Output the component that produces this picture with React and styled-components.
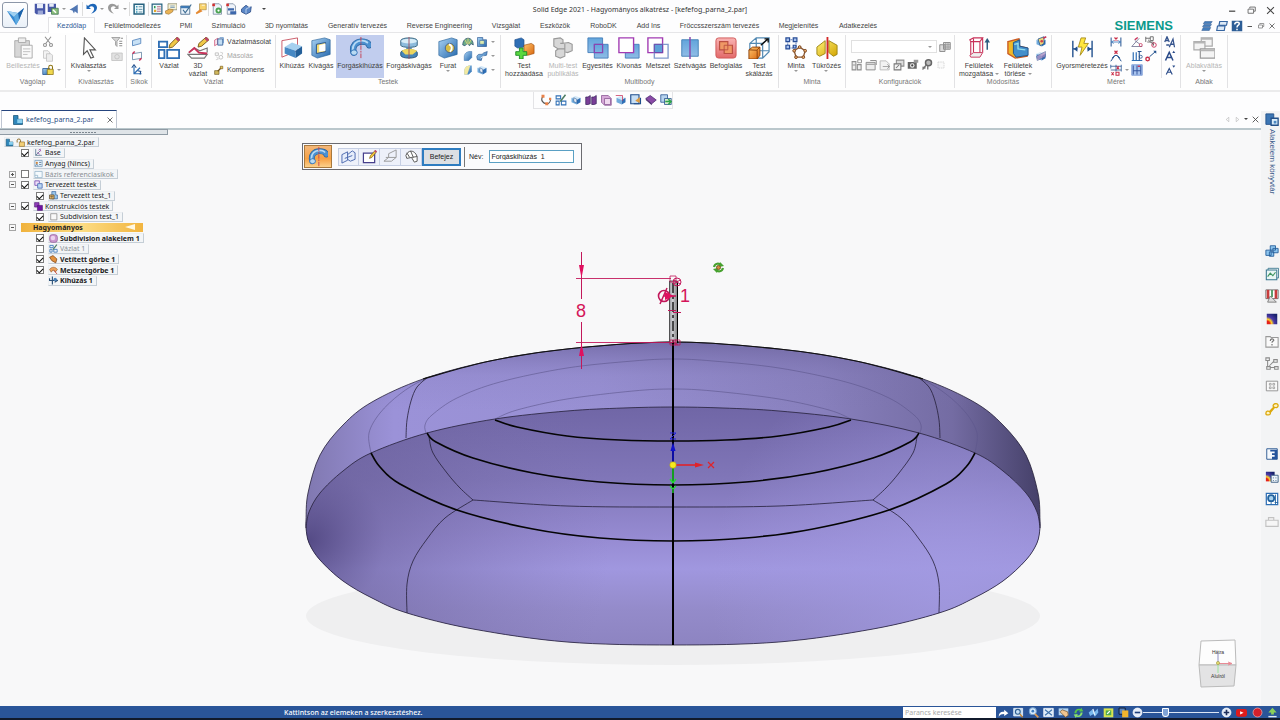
import React from "react";
import styled, { createGlobalStyle } from "styled-components";

const GlobalStyle = createGlobalStyle`
  * {
    box-sizing: border-box;
  }

  html, body, #root {
    height: 100%;
    margin: 0;
  }

  body {
    overflow: hidden;
    background: #fdfdfe;
    color: #444;
    font-family: "Liberation Sans", Arial, sans-serif;
    font-size: 7px;
    line-height: 8px;
  }

  button, input, select {
    font: inherit;
    color: inherit;
    margin: 0;
    padding: 0;
    border: 0;
    background: none;
  }
`;

/* ---------- icons ---------- */

const BLUE = "#2f6fb5";
const NAVY = "#1f4e8c";
const RED = "#c8325a";
const GREY = "#8f8f8f";
const PALE = "#bdbdbd";

const Gradients = () => (
  <defs>
    <linearGradient id="gBlue" x1="0" y1="0" x2="1" y2="1">
      <stop offset="0" stopColor="#a9d2f3" />
      <stop offset="1" stopColor="#2468ad" />
    </linearGradient>
    <linearGradient id="gSky" x1="0" y1="0" x2="0" y2="1">
      <stop offset="0" stopColor="#62a5dc" />
      <stop offset="1" stopColor="#8fbce6" />
    </linearGradient>
    <linearGradient id="gYellow" x1="0" y1="0" x2="1" y2="1">
      <stop offset="0" stopColor="#fff27a" />
      <stop offset="1" stopColor="#d3a400" />
    </linearGradient>
    <linearGradient id="gOrange" x1="0" y1="0" x2="1" y2="1">
      <stop offset="0" stopColor="#ffc46b" />
      <stop offset="1" stopColor="#d9660d" />
    </linearGradient>
    <linearGradient id="gRed" x1="0" y1="0" x2="0" y2="1">
      <stop offset="0" stopColor="#f9b3b3" />
      <stop offset="1" stopColor="#e26a6a" />
    </linearGradient>
    <radialGradient id="gHeat" cx="0" cy="1" r="1.200">
      <stop offset="0" stopColor="#e3201b" />
      <stop offset="0.25" stopColor="#e3201b" />
      <stop offset="0.4" stopColor="#ffd42a" />
      <stop offset="0.6" stopColor="#4c3aa8" />
      <stop offset="1" stopColor="#17226b" />
    </radialGradient>
  </defs>
);

const pencil = (
  <>
    <path d="M8 10 9 7 14 1.500 15.500 3 10.500 9Z" fill="#f3c73c" stroke="#7a5c12" strokeWidth=".7" />
    <path d="M13 2.500 14.300 1 16 2.500 14.800 4Z" fill="#c1446c" />
  </>
);

const box = (
  <>
    <path d="M2 5 7 2.500 14 5 9 8Z" fill="#d3e8f8" />
    <path d="M2 5v6l7 3V8Z" fill="#71abdc" />
    <path d="M9 8v6l5-3V5Z" fill={BLUE} />
  </>
);

// Small glyphs are drawn on a 16 grid, large ones on a 24 grid.
const small = {
  save: <><path d="M1 1h14v14H3L1 13Z" fill="#4757a8" /><path d="M4 1h8v6H4Z" fill="#e7ecf8" /><path d="M5 10h7v5H5Z" fill="#9aa6d6" /></>,
  saveAs: <><path d="M1 1h11v11H1Z" fill="#4757a8" /><path d="M3 1h6v4H3Z" fill="#e7ecf8" /><path d="M6 7h9v8H6Z" fill="#8abf7b" stroke="#3d6f54" /><path d="m8 9 4 4" stroke="#fff" strokeWidth="2" /></>,
  back: <path d="M13 2v12L9 11l-1 3-2-4-4-1 5-3Z" fill="#5076b3" />,
  undo: <path d="M2 2v6h6L5.500 5.700C9 3 13 5 12 9c-.4 2-2 3.500-4 5 5-1 8-4 8-8 0-5-7-7-12-2Z" fill="#1d66b8" />,
  redo: <path d="M14 2v6H8l2.500-2.300C7 3 3 5 4 9c.4 2 2 3.500 4 5-5-1-8-4-8-8 0-5 7-7 12-2Z" fill="#9a9a9a" />,
  form: <><path d="M1.500 1.500h13v13h-13Z" fill="#eef8fb" stroke="#26617f" strokeWidth="2" /><path d="M4 4h2v2H4zM4 7.500h2v2H4zM4 11h2v2H4z" fill="#3b98b9" /><path d="M7.500 5h5M7.500 8.500h5M7.500 12h5" stroke="#3c7490" /></>,
  formColor: <><path d="M1.500 1.500h13v13h-13Z" fill="#eef8fb" stroke="#26617f" strokeWidth="1.600" /><path d="M4 4h2v3H4z" fill="#2e9d52" /><path d="M4 9h3v3H4z" fill="#e4a72a" /><path d="M8 5h5M8 8h5M8 11h5" stroke="#b33a56" /></>,
  cardHand: <><path d="M4 1h12v8H4Z" fill="#f6f2d8" stroke="#8a8565" /><path d="M7 4h6M7 6h6" stroke="#688db0" /><path d="m0 11 6-3 5 1-1 3-5 3-4-1Z" fill="#e9b355" stroke="#8f682a" strokeWidth=".7" /></>,
  check: <><path d="M1 4h12v11H1Z" fill="#eaf2fa" stroke="#34597f" /><path d="M1 4h12v3H1Z" fill="#3f79b4" /><path d="m4 9 3 4 8-11" fill="none" stroke="#3e6d93" strokeWidth="1.600" /></>,
  brush: <><path d="M6 1h9v8H6Z" fill="#f8d36c" stroke="#94712a" strokeWidth=".7" /><path d="M9 3h4" stroke="#fff" /><path d="m7 8 3 3-8 4-1-2Z" fill="#e58a32" /></>,
  gearRed: <><path d="M3 1h8l3 3v11H3Z" fill="#eef3fa" stroke="#526a85" strokeWidth=".8" /><path d="m2 1 3 3m0-3L2 4" stroke="#d32f2f" strokeWidth="1.800" /><circle cx="10" cy="10" r="4" fill="#4ba352" /><circle cx="10" cy="10" r="1.500" fill="#fff" /></>,
  gearBlue: <><path d="M3 1h8l3 3v11H3Z" fill="#eef3fa" stroke="#526a85" strokeWidth=".8" /><path d="m2 1 3 3m0-3L2 4" stroke="#d32f2f" strokeWidth="1.800" /><path d="M4 7h8v3H4zM7 11h8v4H7z" fill="#3c67ac" /></>,
  ship: <><path d="M2 8 8 3l4 3 3-1-1 7-6 3-6-3Z" fill="#5a86c6" stroke="#2a4a83" /><path d="m8 8 6-3M8 8v6" stroke="#d3e3f5" /></>,
  cut: <><path d="m4 1 7 9M12 1 5 10" stroke={GREY} strokeWidth="1.400" /><circle cx="4" cy="12" r="2" fill="none" stroke={GREY} strokeWidth="1.400" /><circle cx="12" cy="12" r="2" fill="none" stroke={GREY} strokeWidth="1.400" /></>,
  copy: <><path d="M2 1h6l2 2v8H2Z" fill="#f3f3f3" stroke={PALE} /><path d="M6 5h6l2 2v8H6Z" fill="#ededed" stroke={PALE} /></>,
  lockTool: <><path d="M1 6h9v8H1Z" fill="url(#gBlue)" stroke={NAVY} /><path d="M7 7h8v7H7Z" fill="#f0d84e" stroke="#8c7312" /><path d="M9 7V4c0-3 5-3 5 0v3" fill="none" stroke="#8c7312" strokeWidth="1.400" /></>,
  filter: <><path d="M1 2h11L8 7v7l-2-2V7Z" fill="#d5d5d5" stroke={GREY} /><path d="M13 3h3M11 7h4M11 10h4M11 13h4" stroke={GREY} strokeWidth="1.400" /></>,
  camera: <><path d="M1 4h14v10H1Z" fill="#e2e2e2" stroke={PALE} /><circle cx="8" cy="9" r="3" fill="none" stroke={PALE} /></>,
  plane: <path d="M2 6 13 3v7L2 13Z" fill="#c8e1f5" stroke="#5c8abf" strokeWidth="1.200" />,
  planeRed: <><path d="M2 5 14 3v8L2 13Z" fill="none" stroke="#597b9c" /><path d="m2 5 3-3M14 11l-3 3" stroke={RED} strokeWidth="2" /></>,
  axes: <><path d="M4 3v10h10M4 13 12 5" fill="none" stroke={BLUE} strokeWidth="1.600" /><path d="m1 5 3-4 3 4M9 9l4 1-1 4" fill="none" stroke={NAVY} strokeWidth="1.400" /></>,
  sketchCopy: <><path d="M1 5 6 2v9l-5 3Z" fill="#f5e5ee" stroke={RED} /><path d="M6 3h8v10H6Z" fill="#c4def3" stroke={NAVY} strokeWidth="1.200" /><path d="M9 1h6v9" fill="none" stroke={BLUE} /></>,
  sketchMove: <><path d="M2 3h5v4H2z" fill="none" stroke={PALE} strokeWidth="1.400" /><circle cx="11" cy="10" r="3" fill="none" stroke={PALE} strokeWidth="1.400" /><path d="m4 9 3 4-4 1M10 2l4 1-1 3" fill="none" stroke={PALE} /></>,
  component: <><path d="M1 9h7v6H1Z" fill="#d0b85d" stroke="#685521" /><path d="m6 10 6-6" stroke="#735618" strokeWidth="2" /><path d="M10 2h4v4h-4Z" fill="#e8c85a" stroke="#735618" /></>,
  dome: <><path d="M1 12c0-12 14-12 14 0l-3-2-2 3-3-3-3 3Z" fill="#6bab86" stroke="#2d5272" /><path d="M8 3v8M4 5l3 6M12 5l-3 6" stroke="#f0db78" /></>,
  thin: <><path d="M2 2h7v3h5v9H2Z" fill="url(#gBlue)" stroke={NAVY} strokeWidth=".8" /><path d="M5 6h6v5H5Z" fill="#dcebb0" stroke={NAVY} strokeWidth=".6" /></>,
  round: <path d="M3 14V9c0-4 3-7 8-7h2v8l-4 4Z" fill="url(#gBlue)" stroke="#336da8" strokeWidth=".7" />,
  roundY: <><path d="M3 14V9c0-4 3-7 8-7h2v8l-4 4Z" fill="url(#gBlue)" /><path d="M3 14V9c0-4 3-7 8-7L7 14Z" fill="#f2e9a0" /></>,
  sweep: <><path d="M1 9c2-6 6-1 9-5l5-2-1 5c-4 1-5 0-6 3l-1 4-5-1Z" fill="url(#gBlue)" stroke={NAVY} strokeWidth=".8" /><path d="m6 11 4-3" stroke="#fff" /></>,
  boxCut: <>{box}<path d="m5 5 4 2v5l-4-2Z" fill="#e5edf7" stroke={NAVY} strokeWidth=".7" /></>,
  cfgA: <><path d="M1.500 3.500h5v11h-5zM8.500 7.500h5v7h-5z" fill="#eee" stroke={GREY} strokeWidth="1.400" /><path d="M9 1h5v4H9zM2 8h4" fill="none" stroke={GREY} strokeWidth="1.200" /></>,
  cfgB: <><path d="M1.500 4.500h12v10h-12z" fill="#eee" stroke={GREY} strokeWidth="1.300" /><path d="M2 7h11M7 2h8v6" fill="none" stroke={GREY} strokeWidth="1.300" /></>,
  cfgC: <><path d="M1.500 2.500h8l4 4v8h-12z" fill="#f2f2f2" stroke={PALE} strokeWidth="1.300" /><path d="M5 10h9m-3-3 3 3-3 3" fill="none" stroke={GREY} /></>,
  cfgD: <><path d="M4.500 1.500h10v8h-10z" fill="#ddd" stroke={GREY} strokeWidth="1.400" /><path d="M1.500 6.500h9v8h-9z" fill="#f4f4f4" stroke="#777" strokeWidth="1.400" /><path d="m4 12 4-4" stroke="#777" strokeWidth="1.400" /></>,
  cfgCam: <><path d="M1 4h12v9H1Z" fill="#666" /><circle cx="7" cy="8.500" r="3" fill="#eee" /><circle cx="7" cy="8.500" r="1.500" fill="#444" /><path d="M9 1h6v4H9z" fill="#999" /></>,
  cfgKey: <><circle cx="10" cy="5" r="4" fill="#bbb" stroke="#666" strokeWidth="2" /><path d="m7 8-5 6M9 9v5M2 11l4 1" stroke="#777" strokeWidth="1.800" /></>,
  cfgEmpty: <path d="M4 4h8v8H4Z" fill="#fafafa" stroke="#ccc" strokeDasharray="2 1" />,
  cfgStack: <><path d="M1 5h7v9H1zM6 2h9v9H6z" fill="#dcdcdc" stroke={GREY} strokeWidth="1.300" /><path d="M6 5h9M6 8h9M9 2v9M12 2v9" stroke={GREY} /></>,
  faceRed: <>{box}<path d="m4 4 8-3v9l-5 3Z" fill="#edd679" stroke={NAVY} /><circle cx="9" cy="7" r="1.800" fill="#d2404a" /><path d="m11 3 4-2" stroke={RED} strokeWidth="2" /></>,
  facePurple: <>{box}<path d="M2 8 14 2v7L3 14Z" fill="#ab86bb" opacity=".7" stroke="#405b98" /></>,
  dimH: <><path d="M1.500 2v12M14.500 2v12" stroke={NAVY} strokeWidth="1.300" /><path d="M2 8h12M5 6 2 8l3 2M11 6l3 2-3 2" fill="none" stroke={BLUE} /><path d="m6 2 4 4m0-4L6 6" stroke="#c92d47" strokeWidth="1.600" /></>,
  dimAngle: <><path d="m6 1 4 4m0-4L6 5" stroke="#c92d47" strokeWidth="1.600" /><path d="M1 15 6 8M15 15l-5-7M3 11c2-5 8-5 10 0" fill="none" stroke={NAVY} strokeWidth="1.300" /></>,
  dimChain: <><path d="M1 3h14M1 1v5M8 1v9M15 1v9M1 8h14" stroke={NAVY} /><path d="m9 3 3 4m0-4L9 7M2 11l3 4m0-4-3 4M8 11h4v4H8z" fill="none" stroke="#c92d47" strokeWidth="1.400" /></>,
  dimSlope: <><path d="M1 14 11 3M1 14h14M5 6l7 5" stroke="#668" /><path d="m5 5 4-3" stroke={RED} strokeWidth="2" /><circle cx="13" cy="12" r="2" fill="none" stroke={RED} /></>,
  dimBars: <><path d="M3 3v11M7 3v11M1 14h14" stroke={BLUE} strokeWidth="1.600" /><path d="M11 2v12M9 2h5" stroke={NAVY} strokeWidth="1.400" /><circle cx="13" cy="9" r="2" fill="none" stroke={NAVY} /></>,
  dimGrid: <><path d="M1 1h14v14H1Z" fill="#a9c4ee" stroke="#6b8fd0" /><path d="M3 2v12M8 2v12M13 2v12M3 9h10" stroke="#33549d" strokeWidth="1.300" /><path d="M9 3h3" stroke="#c13a5c" strokeWidth="2" /></>,
  dimTag: <><path d="M1 1v7M1 3h6M7 1h4v5H7zM3 8h8v5" fill="none" stroke="#666" strokeWidth="1.200" /><circle cx="12" cy="12" r="3" fill="none" stroke={RED} strokeWidth="1.200" /><path d="m4 5 8 7" stroke="#555" /></>,
  dimArrow: <><circle cx="3.500" cy="12" r="2.400" fill="none" stroke="#c92d47" strokeWidth="1.800" /><path d="m6 9 8-7" stroke={NAVY} strokeWidth="1.300" /><path d="M11 1h4v4Z" fill={NAVY} /></>,
  textStyle: <path d="m1 8 3-7 3 7M2 6h4M7 15l5-11 2 11M9 11h5M3 12h4" fill="none" stroke="#36548d" strokeWidth="1.700" />,
  textUp: <><path d="M2 14 7 3l5 11M4 10h6" fill="none" stroke="#294a88" strokeWidth="2" /><path d="m11 4 2-3 2 3Z" fill="#294a88" /></>,
  textDown: <><path d="m3 14 4-8 4 8M4 11h6" fill="none" stroke="#294a88" strokeWidth="1.500" /><path d="m11 2 2 3 2-3Z" fill="#294a88" /></>,
  arc: <><path d="M4 3c-4 5 0 10 5 10 3 0 5-3 5-6" fill="none" stroke="#555" strokeWidth="1.500" /><path d="M2 1h4v4H2zM7 11h4v4H7zM12 5h3v3h-3z" fill="#e9824a" /></>,
  sketch: <><path d="M1.500 2.500h6v4h-6zM1.500 9.500h4v5h-4zM8.500 9.500h6v5h-6z" fill="none" stroke={BLUE} strokeWidth="1.400" /><path d="m7 10 7-9" stroke="#4c7b61" strokeWidth="2" /></>,
  mirror: <path d="M1 4h3l3-2v11l-3 1H1zM9 4h3l3-2v11l-3 1H9z" fill="#7a3e98" stroke="#3c255f" />,
  purpleBox: <><path d="M2 2h9l4 4v9H6l-4-4Z" fill="#d6a8d8" stroke="#875492" /><path d="M6 6h8v8H6Z" fill="#f0d9ef" stroke="#875492" /></>,
  boxRed: <>{box}<path d="M1 2h9v7" fill="none" stroke={RED} /></>,
  screen: <><path d="M1 1h11v12H1Z" fill="#c6def5" stroke={NAVY} strokeWidth="1.500" /><path d="M5 13h9V5" fill="none" stroke={NAVY} strokeWidth="1.500" /><path d="m7 9 6-5v8Z" fill="#e09a3e" /></>,
  diamond: <><path d="m1 6 6-4 8 6-6 5Z" fill="#8a4aa7" stroke="#4b2a6e" /><path d="m1 6 8 7v2L1 8Z" fill="#4b2a6e" /></>,
  export: <><path d="M1 1h9v10H1Z" fill="#b7d3ee" stroke={NAVY} /><path d="M6 6h9v8H6Z" fill="#d9e9d1" stroke={NAVY} /><path d="M7 10h7m-3-3 4 3-4 4" fill="none" stroke="#2ea34b" strokeWidth="2" /></>,
  winStack: <path d="M5 2h10l-2 3H3zM4 6h10l-2 3H2zM3 10h10l-2 4H1z" fill="#437dbc" stroke="#234f86" strokeWidth=".6" />,
  winStack2: <path d="M5 2h10l-1 5H4zM2 8h10l-1 6H1z" fill="#dce9f6" stroke="#3665a1" strokeWidth="1.600" />,
  help: <><path d="M1 1h14v14H1Z" fill="#2c5d96" /><path d="M5 6c0-4 6-4 6-1 0 2-3 2-3 5" fill="none" stroke="#fff" strokeWidth="2" /><path d="M7 11.500h2v2H7z" fill="#fff" /></>,
  min: <path d="M3 9h9" stroke="#444" strokeWidth="1.800" />,
  restore: <path d="M5.500 5V3h8v6h-2M3 6h8v6H3Z" fill="none" stroke="#666" strokeWidth="1.300" />,
  close: <path d="m3 3 10 10M13 3 3 13" stroke="#444" strokeWidth="1.500" />,
  part: <><path d="M2 2h6v5h6v7H2Z" fill="#2f86ba" stroke="#1c5577" /><path d="M7 7h7v5H7z" fill="#8bd0ef" /></>,
  openLock: <><path d="M6 7h9v8H6Z" fill="#f2cf78" stroke="#87621a" /><path d="M8 7V4c0-3-6-3-6 0v4" fill="none" stroke="#87621a" strokeWidth="1.600" /></>,
  base: <><path d="M3 2v11h11M3 13 11 5" fill="none" stroke="#54718e" strokeWidth="1.400" /><path d="m8 4 3-2 1 4M6 8l4 3" fill="none" stroke="#a44fae" strokeWidth="1.500" /></>,
  material: <><path d="M1.500 2.500h13v11h-13z" fill="#eaf4fb" stroke="#4d7ca5" /><circle cx="5" cy="7" r="2" fill="#d08843" /><path d="M3 12c0-3 4-3 4 0M9 6h4M9 10h4" fill="none" stroke="#34597f" strokeWidth="1.300" /></>,
  refPlane: <path d="M1.500 2.500h13v11h-13zM1.500 9.500h5v4" fill="#f5fafd" stroke="#8fafc8" strokeWidth="1.300" />,
  bodies: <><path d="M1.500 1.500h8v8h-8z" fill="#efe0f8" stroke="#7c4fb5" strokeWidth="1.500" /><path d="M6.500 6.500h8v8h-8z" fill="#bcd8f2" stroke="#4c71b8" strokeWidth="1.500" /></>,
  body: <><path d="M5 1h7v6h3v7H5Z" fill="#99c6ea" stroke={NAVY} /><path d="M1 7h8v7H1Z" fill="#f4c471" stroke="#5a4b31" strokeWidth="1.400" /><path d="M5 8v5M2 10h6" stroke="#5a4b31" /></>,
  construct: <><path d="M1 1h8v8H1z" fill="#8f3fb8" stroke="#4a126b" /><path d="M6 6h9v9H6z" fill="#7112a4" stroke="#4a126b" /></>,
  blank: <path d="M3 3h11v11H3Z" fill="#f8f8f8" stroke="#888" strokeWidth="1.300" />,
  sphere: <><rect x="1" y="1" width="14" height="14" rx="5" fill="#c996cc" stroke="#8a5490" /><circle cx="7" cy="7" r="4" fill="#ecd3ee" /></>,
  curveA: <path d="m1 4 6-3 7 6-2 7-7-4Z" fill="#e2903c" stroke="#7b4518" strokeWidth="1.300" />,
  curveB: <><path d="M1 6c4-5 10-5 14 0l-3 4-5-3-3 4Z" fill="#eda25a" stroke="#8a4c1b" /><path d="m9 8 5 6" stroke="#c0392b" strokeWidth="1.600" /></>,
  extrude: <><path d="M1 4v4h9V4M6 1v14M10 6l5 2-5 3" fill="none" stroke="#2a5078" strokeWidth="2" /><circle cx="11" cy="6" r="3" fill="#4e86bf" /></>,
  library: <><path d="M1 1h9v12H1Z" fill="#3d76b4" stroke="#23518a" /><path d="M7 6h8v8H7Z" fill="#d9ecfa" stroke="#23518a" strokeWidth="1.500" /><path d="M10 9h3v3h-3z" fill="#4b88c2" /></>,
  cubes: <path d="M6 2h6v5H6zM9 5h6v5H9zM1 7h6v6H1zM5 9h5v5H5z" fill="#8cc4ee" stroke="#245d99" />,
  picture: <><path d="M3.500 1.500h12v11h-12z" fill="#fff" stroke="#37768e" /><path d="M1.500 3.500h12v11h-12z" fill="#e9f5f5" stroke="#37768e" strokeWidth="1.200" /><path d="m3 11 3-4 3 3 3-4" fill="none" stroke="#3f9460" strokeWidth="1.300" /></>,
  stripes: <><path d="M1 1h14v10H1Z" fill="#fff" stroke="#666" /><path d="M2 1h3v10H2z" fill="#c73c3c" /><path d="M7 1h2v8H7z" fill="#45945b" /><path d="M11 1h3v10h-3z" fill="#c73c3c" /><path d="M3 15 6 8l7 7Z" fill="#ddd" stroke="#777" /></>,
  heat: <path d="M2 2h12v12H2Z" fill="url(#gHeat)" />,
  folderHelp: <><path d="M1 3h5l1 1h8v11H1Z" fill="#fafafa" stroke="#999" strokeWidth="1.200" /><path d="M6 8c0-3 4-3 4-1 0 1-2 1-2 3M8 11.500V13" fill="none" stroke="#777" strokeWidth="1.400" /></>,
  tree: <path d="M1 1h4v3H1zM10 3h4v3h-4zM2 11h4v3H2zM11 11h4v3h-4zM3 4v7M6 12h5M5 10l5-5" fill="none" stroke="#8a8a8a" strokeWidth="1.200" />,
  keypad: <><path d="M1.500 2.500h13v11h-13z" fill="#fafafa" stroke="#8a8a8a" /><path d="M5 5h2v2H5zM9 5h2v2H9zM5 9h2v2H5zM9 9h2v2H9z" fill="none" stroke="#8a8a8a" strokeWidth=".8" /></>,
  link: <path d="M10 6c-3-4 5-6 5-2 0 2-2 3-4 2l-5 6c1 4-5 3-5 1 0-3 3-3 4-2Z" fill="#fff3c2" stroke="#dca90d" strokeWidth="1.500" />,
  bookF: <><path d="M2 2h12v12H2Z" fill="#f5f9fd" stroke={NAVY} /><path d="M6 3h8v11H8v-3h3V9H8V7h3V5H6Z" fill="#24549c" /></>,
  heatForm: <><path d="M1 2h10v11H1Z" fill="url(#gHeat)" /><path d="M7 6h8v8H7Z" fill="#eef4fa" stroke="#34597f" /><path d="M9 9h1m2 0h1M9 12h1m2 0h1" stroke="#34597f" /></>,
  gearBox: <><path d="M1.500 1.500h13v13h-13z" fill="#fff" stroke={BLUE} strokeWidth="1.400" /><circle cx="7" cy="7" r="3.500" fill="#a8d2ee" stroke="#22639f" strokeWidth="2" /><path d="M7 11v3M11 12h4M12 3v11" stroke="#22639f" /></>,
  folder: <path d="M1 6h3V3h6v3h5v7H1ZM4 6h6" fill="#f6f6f6" stroke="#c2c2c2" strokeWidth="1.300" />,
  redoWhite: <path d="M1 14c0-6 4-8 8-7V4l6 5-6 4v-3c-4 0-6 1-8 4Z" fill="#fff" />,
  zoomArea: <><path d="M1 2h13v11H1Z" fill="#c5dff5" stroke="#fff" /><circle cx="7" cy="7" r="3.500" fill="none" stroke="#2d5d8f" strokeWidth="1.600" /><path d="m10 10 4 5" stroke="#c4822a" strokeWidth="2" /></>,
  zoom: <><circle cx="7" cy="6" r="5" fill="#d7ebfb" stroke="#7aa5d1" strokeWidth="1.500" /><circle cx="7" cy="6" r="2" fill="#3d7cc0" /><path d="m10 10 5 5" stroke="#e39d51" strokeWidth="2.400" /></>,
  fit: <><path d="M1 2h14v12H1Z" fill="#dcebf8" stroke="#fff" /><path d="m3 4 10 8M13 4 3 12" stroke="#3e70a9" strokeWidth="1.600" /></>,
  hand: <><path d="M1 2h14v10H1Z" fill="#b2d3ef" /><path d="m3 7 3-3 8 3 1 5-4 3Z" fill="#f0c48f" stroke="#6d4c28" /></>,
  rotate: <><path d="M2 9c0-5 5-8 9-6l1-2 3 5-6 1 1-2c-3-1-5 1-5 4Z" fill="#58c548" /><path d="M14 8c0 5-5 8-9 6l-1 2-3-5 6-1-1 2c3 1 5-1 5-4Z" fill="#8ce06a" /></>,
  spin: <><path d="m1 8 5-4 3 4 5-6 1 6-5 6-2-4-5 3Z" fill="#79b9ed" /><path d="m7 3 3 9" stroke="#dceffd" strokeWidth="2" /></>,
  style: <><path d="M1 2h14v13H1Z" fill="#d8e552" /><path d="M4 5h8v7H4Z" fill="#4da94e" /><path d="m6 10 4-4" stroke="#fff" strokeWidth="2" /></>,
  colors: <><path d="M1.500 1.500h9v9h-9z" fill="#5c86bd" stroke="#111c33" strokeWidth="1.400" /><path d="M6 5h9v10H6Z" fill="#f1b52d" /></>,
  video: <><rect y="3" width="16" height="11" rx="3" fill="#e01b1b" /><path d="m6 6 5 2.500L6 11Z" fill="#fff" /></>,
  record: <circle cx="8" cy="8" r="6.500" fill="#d3202c" stroke="#f3b2b2" />,
  upload: <><path d="m8 1 6 7h-4v3H6V8H2Z" fill="#8bd05b" /><path d="M2 13h12v2H2Z" fill="#dfe9f4" /></>,
  minus: <><circle cx="8" cy="8" r="6.500" fill="#e6eefa" stroke="#fff" /><path d="M4 8h8" stroke="#1d3f7c" strokeWidth="2.400" /></>,
  plus: <><circle cx="8" cy="8" r="6.500" fill="#e6eefa" stroke="#fff" /><path d="M4 8h8M8 4v8" stroke="#1d2f5c" strokeWidth="2.400" /></>,
  cmdPlane: <path d="M1 6 7 3v9l-6 3ZM7 6l5-4 3 2v7l-5 2-3-2M4 10l8-3" fill="#e6edfb" stroke="#4a68ae" />,
  cmdSketch: <><path d="M1.500 4.500h12v10h-12z" fill="#fff" stroke="#463f8c" strokeWidth="1.300" />{pencil}</>,
  cmdAxis: <path d="M1 13h8l5-4H6ZM6 9V5l8-4v8M3 9h3" fill="none" stroke="#999" />,
  cmdArc: <path d="M2 7c2-6 9-7 12 1v5l-3 1-3-5-5 1ZM8 9l6-1M3 4l3 5M7 2l3 7" fill="#fff" stroke="#555" />,
};

const revolve = (
  <>
    <path d="M5 17C3 9 8 5 14 5c4 0 7 1 8 4" fill="none" stroke="#265f9c" strokeWidth="7" strokeLinecap="round" />
    <path d="M5 17C3 9 8 5 14 5c4 0 7 1 8 4" fill="none" stroke="#4c90cf" strokeWidth="5.500" strokeLinecap="round" />
    <path d="M4 14c0-6 4-10 10-10 3 0 5 1 6 2" fill="none" stroke="#b7daf5" strokeWidth="2" strokeLinecap="round" />
    <ellipse cx="5.500" cy="17" rx="3.500" ry="3" fill="#b9daf2" stroke={BLUE} />
    <path d="M13 0v24" stroke="#c43b4e" strokeDasharray="5 1 2 1" />
  </>
);

const large = {
  paste: <><path d="M3 4h16v18H3Z" fill="#d7d7d7" stroke="#aaa" /><path d="M7 1h8v5H7Z" fill="#eee" stroke="#aaa" /><path d="M10 9h12v14H10Z" fill="#fafafa" stroke="#aaa" /><path d="M12 13h8M12 16h8M12 19h5" stroke="#bbb" /></>,
  cursor: <path d="m7 1 12 13h-6l4 8-3 1-4-8-4 4Z" fill="#fff" stroke="#555" strokeWidth="1.200" />,
  sketch: <><path d="M1 5h9v6H1zM1 14h6v9H1zM10 14h13v9H10z" fill="#fff" stroke={BLUE} strokeWidth="2" /><path d="m12 12 1-4 8-8 3 3-8 8Z" fill="#efc848" stroke="#77591a" /><path d="m19 2 2-2 3 3-2 2Z" fill="#bb426b" /></>,
  sketch3d: <><path d="m2 17 6-5 6 3 8-3v5M1 19h21l-3 4H5Z" fill="none" stroke="#777" strokeWidth="1.300" /><path d="m2 17 6-5 5 5 9 1" fill="none" stroke={RED} strokeWidth="2" /><path d="m12 11 1-4 8-7 3 3-8 7Z" fill="#efc848" stroke="#77591a" /><path d="m19 2 2-2 3 3-2 2Z" fill="#bb426b" /></>,
  extrude: <><path d="M1 4 18 1v14L1 22Z" fill="#fff" stroke="#c75463" /><path d="m4 11 8-5 11 4-7 5Z" fill="#a6d0ef" /><path d="m4 11 12 4v8L4 18Z" fill="#4789c4" /><path d="m16 15 7-5v8l-7 5Z" fill="#246099" /></>,
  cutout: <><path d="m2 4 14-3 6 2v16L8 23l-6-3Z" fill="url(#gBlue)" stroke="#286399" strokeWidth=".7" /><path d="m7 8 10-2v10L7 18Z" fill="#f4dc74" stroke={NAVY} /><path d="m10 9 7-2v8l-7 1Z" fill="#fff" /></>,
  revolve,
  revolveCut: <><path d="M3 4c0-4 18-4 18 0v5c0 3-18 3-18 0Z" fill="#8dbbdc" stroke="#33617c" /><ellipse cx="12" cy="4.500" rx="8.500" ry="2.500" fill="#d8edf7" /><path d="M9 11h6v5H9Z" fill="#5a89ad" /><path d="M3 17c0-4 18-4 18 0v3c0 4-18 4-18 0Z" fill="#4686ba" stroke="#254f73" /><path d="M4 15c4-3 12-3 17 0l-5 4H8Z" fill="#edd65d" /><path d="M12 0v24" stroke="#9b5060" /></>,
  hole: <><path d="m2 5 14-4 6 2v16L8 23l-6-3Z" fill="url(#gBlue)" stroke="#286399" strokeWidth=".7" /><circle cx="14" cy="12" r="5" fill="#d7bd45" stroke="#46618b" /><path d="M13 8c4 1 4 6 1 8" fill="none" stroke="#fff" strokeWidth="2" /></>,
  addBody: <><path d="M2 3 9 1l3 2v8l-7 1-3-2Z" fill={BLUE} stroke={NAVY} strokeWidth=".7" /><path d="m12 9 8-2 3 2v9l-7 2-4-2Z" fill="url(#gOrange)" stroke="#9c4b0b" strokeWidth=".7" /><path d="M7 12h4v4h4v4h-4v4H7v-4H3v-4h4Z" fill="#5bd93f" stroke="#1f8a28" /></>,
  multiBody: <path d="m2 2 7-1 3 2v4l6-1 4 2v7l-5 2-3-1v5l-5 2-5-2v-6l3-2-5-3ZM9 7h5v6H5M14 13v5" fill="#d7d7d7" stroke="#999" strokeWidth="1.200" />,
  union: <><path d="M1 1h16v16H1Z" fill="url(#gSky)" stroke="#447eba" /><path d="M8 8h15v15H8Z" fill="url(#gSky)" stroke="#447eba" /><path d="M8 8h9v9H8Z" fill="none" stroke="#8a45b1" strokeWidth="1.400" /></>,
  subtract: <><path d="M8 8h15v15H8Z" fill="url(#gSky)" stroke="#447eba" /><path d="M1 1h16v16H1Z" fill="#fff" stroke="#a13bb2" strokeWidth="1.500" /></>,
  intersect: <><path d="M1 1h16v16H1Z" fill="#fff" stroke="#a13bb2" strokeWidth="1.500" /><path d="M8 8h15v15H8Z" fill="none" stroke="#829bcd" strokeWidth="1.500" /><path d="M8 8h9v9H8Z" fill="#5da0d8" stroke="#6f40a5" /></>,
  split: <><path d="M3 3h18v18H3Z" fill="url(#gSky)" stroke="#4380b6" /><path d="M12 0v24" stroke="#884aad" strokeWidth="1.600" /></>,
  enclose: <><rect x="1" y="1" width="22" height="22" rx="3" fill="url(#gRed)" stroke="#cf5555" /><path d="M5 5h9v4h5v9h-9v-4H5Z" fill="#ef9865" stroke="#bc5042" strokeWidth="1.300" /><path d="M10 14V9h4M10 14h4V9" fill="none" stroke="#bc5042" /></>,
  scale: <><path d="M2 7 9 1h14v15l-7 7H2ZM2 7h14v16M16 7l7-6M9 1v14H2M9 15h14" fill="#fff" stroke="#5289b3" strokeWidth="1.300" /><path d="m1 14 4-3h8v9l-3 4H1Z" fill="url(#gOrange)" stroke="#8a3f0a" /><path d="m1 14 9 .5V24M10 14l3-3" fill="none" stroke="#8a3f0a" /><path d="m14 9 8-7m-4 0h4v4" fill="none" stroke="#111" strokeWidth="1.500" /></>,
  pattern: <><path d="M3 3h9v9H3Z" fill="none" stroke="#4b6fb3" strokeDasharray="2 1" /><path d="M1 1h4v4H1zM9 1h4v4H9zM1 9h4v4H1zM9 9h3v3H9z" fill="#a8c2ef" stroke="#274c96" strokeWidth="1.300" /><path d="m16 11 6 4-2 7h-8l-2-7Z" fill="#fff" stroke="#8a5935" strokeWidth="1.500" /><circle cx="16" cy="11" r="1.500" fill="#f0b06e" stroke="#744019" /><circle cx="22" cy="15" r="1.500" fill="#f0b06e" stroke="#744019" /><circle cx="20" cy="22" r="1.500" fill="#f0b06e" stroke="#744019" /><circle cx="12" cy="22" r="1.500" fill="#f0b06e" stroke="#744019" /><circle cx="10" cy="15" r="1.500" fill="#f0b06e" stroke="#744019" /></>,
  mirror: <><path d="m1 11 9-7v14l-6 3-3-2ZM14 4l9 5v10l-4 2-5-4Z" fill="url(#gYellow)" stroke="#9b8411" /><path d="M12.500 0v24" stroke="#d42828" strokeWidth="2" /></>,
  moveFace: <><path d="m2 3 4-2h10l-3 4H3ZM3 5v15M13 5v16M16 1v16M6 2v15" fill="none" stroke={RED} strokeWidth="1.200" /><path d="m2 20 4-3h10l-3 5H3Z" fill="#eee" stroke={RED} /><path d="M21 14V4" stroke="#2c5b7f" strokeWidth="1.600" /><path d="m18 6 3-5 3 5Z" fill="#2c5b7f" /></>,
  deleteFace: <><path d="m1 5 12-3v8l9 2v9L9 23l-8-5Z" fill="#f0b928" stroke="#cc5b23" strokeWidth="1.500" /><path d="m7 6 7-3v7l9 2v8l-13 2-3-4Z" fill="#438fcb" stroke="#1e5188" /><path d="m8 8 4-1v6l8 1" fill="none" stroke="#93dded" strokeWidth="1.500" /></>,
  quickDim: <><path d="M2 4v18M23 4v18M2 13h5M18 13h5" stroke={NAVY} strokeWidth="1.500" /><path d="m3 13 4-3v6Zm19 0-4-3v6Z" fill={NAVY} /><path d="M11 1h5l-2 6h5L10 20l2-9H8Z" fill="#ffe63f" stroke="#a78d1b" /></>,
  windows: <><path d="M9 1h12v9H9Z" fill="#f4f4f4" stroke="#aaa" strokeWidth="1.300" /><path d="M1 5h12v9H1Z" fill="#f4f4f4" stroke="#aaa" strokeWidth="1.300" /><path d="M8 13h16v10H8Z" fill="#f4f4f4" stroke="#999" strokeWidth="1.300" /><path d="M9 2h12M1 6h12M8 14.500h16" stroke="#b5b5b5" strokeWidth="2" /></>,
};

const Svg = styled.svg`
  display: block;
  flex: none;
  width: ${({ $size }) => $size}px;
  height: ${({ $size }) => $size}px;
`;

const Icon = ({ name, size = 12 }) => (
  <Svg viewBox="0 0 16 16" $size={size} aria-hidden="true">{small[name]}</Svg>
);

const BigIcon = ({ name, size = 22 }) => (
  <Svg viewBox="0 0 24 24" $size={size} aria-hidden="true">{large[name]}</Svg>
);

const Caret = styled.i`
  flex: none;
  width: 0;
  height: 0;
  border: 2px solid transparent;
  border-top-color: ${({ $dark }) => ($dark ? "#444" : "#999")};
  border-bottom: 0;
`;

/* ---------- frame ---------- */

const Page = styled.div`
  display: flex;
  flex-direction: column;
  height: 100vh;
`;

const Header = styled.header`
  position: relative;
  flex: none;
`;

const AppButton = styled.button`
  position: absolute;
  left: 2px;
  top: 2px;
  width: 26px;
  height: 26px;
  border: 1px solid #8c97a8;
  border-radius: 3px;
  background: linear-gradient(#fff, #e9f0f8);
`;

const TitleRow = styled.div`
  display: grid;
  grid-template-columns: 1fr auto 1fr;
  align-items: center;
  height: 17px;
`;

const QuickAccess = styled.div`
  display: flex;
  align-items: center;
  padding-left: 33px;
`;

const QuickButton = styled.button`
  display: flex;
  align-items: center;
  justify-content: center;
  gap: 3px;
  width: ${({ $w }) => $w || 15}px;
  height: 14px;
  border-right: ${({ $edge }) => ($edge ? "1px solid #ddd" : "0")};
`;

const Title = styled.h1`
  margin: 0;
  padding-top: 2px;
  font: 400 7px/10px "Noto Sans", sans-serif;
  color: #333;
`;

const WindowControls = styled.div`
  display: flex;
  justify-content: flex-end;
  padding: 3px 4px 0 0;
  gap: ${({ $gap }) => $gap}px;
`;

const PlainButton = styled.button`
  display: grid;
  place-items: center;
`;

const TabRow = styled.nav`
  display: flex;
  align-items: stretch;
  height: 16px;
  padding-left: 48px;
  border-bottom: 1px solid #e6e6e8;
`;

const Tab = styled.a`
  flex: none;
  width: ${({ $w }) => $w}px;
  height: 16px;
  padding-top: 4px;
  text-align: center;
  text-decoration: none;
  white-space: nowrap;
  color: ${({ $active }) => ($active ? "#2d5796" : "#444")};
  border: 1px solid ${({ $active }) => ($active ? "#e3e3e6" : "transparent")};
  border-bottom: 0;
  background: ${({ $active }) => ($active ? "#fff" : "transparent")};
`;

const Brand = styled.strong`
  margin-left: auto;
  padding: 2px 28px 0 0;
  font-size: 13px;
  line-height: 14px;
  color: #0b9a8c;
`;

/* ---------- ribbon ---------- */

const Ribbon = styled.div`
  display: flex;
  flex: none;
  height: 59px;
  padding: 2px 0;
  border-bottom: 2px solid #ebebec;
  background: #fefefe;
`;

const Group = styled.section`
  display: flex;
  flex: none;
  flex-direction: column;
  width: ${({ $w }) => $w}px;
  border-right: 1px solid #e2e2e4;
`;

const GroupBody = styled.div`
  display: flex;
  height: 43px;
  padding-left: ${({ $pad }) => $pad || 0}px;
`;

const GroupTitle = styled.h2`
  margin: 0;
  font: inherit;
  text-align: center;
  color: #777;
`;

const ToolButton = styled.button`
  display: flex;
  flex: none;
  flex-direction: column;
  align-items: center;
  width: ${({ $w }) => $w}px;
  height: 43px;
  padding-top: 2px;
  line-height: 7px;
  white-space: nowrap;
  color: ${({ disabled }) => (disabled ? "#b5b5b5" : "#3f3f3f")};
  background: ${({ $active }) => ($active ? "#c1cdee" : "transparent")};
`;

const ToolLabel = styled.span`
  display: flex;
  flex-direction: column;
  align-items: center;
  gap: 1px;
  padding-top: 3px;
`;

const LastLine = styled.span`
  display: flex;
  align-items: center;
  gap: 2px;
`;

const Tool = ({ icon, lines, w, menu, active, disabled }) => (
  <ToolButton $w={w} $active={active} disabled={disabled}>
    <BigIcon name={icon} />
    <ToolLabel>
      <span>{lines[0]}</span>
      {lines[1] && <LastLine>{lines[1]}{menu && <Caret />}</LastLine>}
      {menu && !lines[1] && <Caret />}
    </ToolLabel>
  </ToolButton>
);

const IconColumn = styled.div`
  display: flex;
  flex: none;
  flex-direction: column;
  gap: 2px;
  width: ${({ $w }) => $w || 14}px;
  padding-top: 1px;
  padding-left: ${({ $pad }) => $pad || 0}px;
  border-left: ${({ $edge }) => ($edge ? "1px solid #e2e2e4" : "0")};
`;

const IconButton = styled.button`
  display: flex;
  align-items: center;
  gap: 3px;
  height: 12px;
  white-space: nowrap;
  color: ${({ disabled }) => (disabled ? "#a5a5a5" : "#3f3f3f")};
`;

const Stack = ({ icons, carets = [], w, pad, edge }) => (
  <IconColumn $w={w} $pad={pad} $edge={edge}>
    {icons.map((name) => (
      <IconButton key={name} aria-label={name}>
        <Icon name={name} />
        {carets.includes(name) && <Caret />}
      </IconButton>
    ))}
  </IconColumn>
);

const ConfigPanel = styled.div`
  display: flex;
  flex-direction: column;
  gap: 6px;
  padding: 5px 0 0 5px;
`;

const ConfigRow = styled.div`
  display: flex;
  align-items: center;
  gap: 2px;
`;

const SelectBox = styled.div`
  display: flex;
  align-items: center;
  width: 86px;
  height: 13px;
  padding-right: 4px;
  border: 1px solid #e0e0e0;
  background: #fff;
`;

const ConfigSelect = styled.select`
  flex: 1;
  min-width: 0;
  height: 11px;
  appearance: none;
  color: #bbb;
`;

const ribbonTabs = [
  ["Kezdőlap", 47], ["Felületmodellezés", 75], ["PMI", 32], ["Szimuláció", 53],
  ["3D nyomtatás", 63], ["Generatív tervezés", 79], ["Reverse Engineering", 85], ["Vizsgálat", 48],
  ["Eszközök", 50], ["RoboDK", 47], ["Add Ins", 43], ["Fröccsszerszám tervezés", 99],
  ["Megjelenítés", 59], ["Adatkezelés", 60],
];

const quickAccess = [
  ["save", 14], ["saveAs", 19, true], ["back", 17, false, true], ["undo", 23, true], ["redo", 24, true, true],
  ["form", 19, false, true], ["formColor", 15], ["cardHand", 14], ["check", 15], ["brush", 16, false, true],
  ["gearRed", 15], ["gearBlue", 14], ["ship", 15],
];

const TopBar = () => (
  <Header>
    <TitleRow>
      <QuickAccess>
        {quickAccess.map(([name, w, caret, edge]) => (
          <QuickButton key={name} $w={w} $edge={edge} aria-label={name}>
            <Icon name={name} />
            {caret && <Caret />}
          </QuickButton>
        ))}
        <QuickButton $w={22} aria-label="Testreszabás"><Caret $dark /></QuickButton>
      </QuickAccess>
      <Title>Solid Edge 2021 - Hagyományos alkatrész - [kefefog_parna_2.par]</Title>
      <WindowControls $gap={8}>
        {["min", "restore", "close"].map((name) => (
          <PlainButton key={name} aria-label={name}><Icon name={name} size={11} /></PlainButton>
        ))}
      </WindowControls>
    </TitleRow>
    <TabRow>
      {ribbonTabs.map(([label, w], i) => (
        <Tab key={label} href="#" $w={w} $active={i === 0}>{label}</Tab>
      ))}
      <Brand>SIEMENS</Brand>
      <WindowControls $gap={3}>
        {["winStack", "winStack2", "help"].map((name) => (
          <PlainButton key={name} aria-label={name}><Icon name={name} /></PlainButton>
        ))}
        {["min", "restore", "close"].map((name) => (
          <PlainButton key={name} aria-label={`doc-${name}`}><Icon name={name} size={8} /></PlainButton>
        ))}
      </WindowControls>
    </TabRow>
    <AppButton aria-label="Solid Edge">
      <Svg viewBox="0 0 24 24" $size={24}>
        <path d="m4 8 11 2 6-5-5 12-3 5Z" fill="#3589d1" />
        <path d="m4 8 11 2-4 4Z" fill="#9fd0f0" />
        <path d="m15 10 6-5-5 12Z" fill="#1c62a9" />
        <path d="m11 14 4-4 1 7-3 5Z" fill="#5ba8e0" />
      </Svg>
    </AppButton>
  </Header>
);

const RibbonBar = () => (
  <Ribbon>
    <Group $w={66}>
      <GroupBody $pad={4}>
        <Tool icon="paste" lines={["Beillesztés"]} w={38} disabled />
        <Stack icons={["cut", "copy", "lockTool"]} carets={["lockTool"]} w={22} />
      </GroupBody>
      <GroupTitle>Vágólap</GroupTitle>
    </Group>
    <Group $w={61}>
      <GroupBody>
        <Tool icon="cursor" lines={["Kiválasztás"]} w={45} menu />
        <Stack icons={["filter", "camera"]} />
      </GroupBody>
      <GroupTitle>Kiválasztás</GroupTitle>
    </Group>
    <Group $w={25}>
      <GroupBody $pad={4}>
        <Stack icons={["plane", "planeRed", "axes"]} />
      </GroupBody>
      <GroupTitle>Síkok</GroupTitle>
    </Group>
    <Group $w={124}>
      <GroupBody>
        <Tool icon="sketch" lines={["Vázlat"]} w={34} />
        <Tool icon="sketch3d" lines={["3D", "vázlat"]} w={24} />
        <IconColumn $w={62} $pad={4}>
          <IconButton><Icon name="sketchCopy" size={10} />Vázlatmásolat</IconButton>
          <IconButton disabled><Icon name="sketchMove" size={10} />Másolás</IconButton>
          <IconButton><Icon name="component" size={10} />Komponens</IconButton>
        </IconColumn>
      </GroupBody>
      <GroupTitle>Vázlat</GroupTitle>
    </Group>
    <Group $w={225}>
      <GroupBody $pad={2}>
        <Tool icon="extrude" lines={["Kihúzás"]} w={28} />
        <Tool icon="cutout" lines={["Kivágás"]} w={30} />
        <Tool icon="revolve" lines={["Forgáskihúzás"]} w={48} active />
        <Tool icon="revolveCut" lines={["Forgáskivágás"]} w={50} />
        <Tool icon="hole" lines={["Furat"]} w={28} menu />
        <Stack icons={["dome", "round", "roundY"]} />
        <Stack icons={["thin", "sweep", "boxCut"]} carets={["thin", "sweep", "boxCut"]} w={20} />
      </GroupBody>
      <GroupTitle>Testek</GroupTitle>
    </Group>
    <Group $w={278}>
      <GroupBody $pad={2}>
        <Tool icon="addBody" lines={["Test", "hozzáadása"]} w={42} />
        <Tool icon="multiBody" lines={["Multi-test", "publikálás"]} w={36} disabled />
        <Tool icon="union" lines={["Egyesítés"]} w={33} />
        <Tool icon="subtract" lines={["Kivonás"]} w={30} />
        <Tool icon="intersect" lines={["Metszet"]} w={28} />
        <Tool icon="split" lines={["Szétvágás"]} w={36} />
        <Tool icon="enclose" lines={["Befoglalás"]} w={36} />
        <Tool icon="scale" lines={["Test", "skálázás"]} w={30} />
      </GroupBody>
      <GroupTitle>Multibody</GroupTitle>
    </Group>
    <Group $w={67}>
      <GroupBody $pad={2}>
        <Tool icon="pattern" lines={["Minta"]} w={30} menu />
        <Tool icon="mirror" lines={["Tükrözés"]} w={31} menu />
      </GroupBody>
      <GroupTitle>Minta</GroupTitle>
    </Group>
    <Group $w={109}>
      <GroupBody>
        <ConfigPanel>
          <ConfigRow>
            <SelectBox>
              <ConfigSelect aria-label="Konfiguráció" disabled />
              <Caret />
            </SelectBox>
            <PlainButton aria-label="Konfigurációk kezelése"><Icon name="cfgStack" /></PlainButton>
          </ConfigRow>
          <ConfigRow>
            {["cfgA", "cfgB", "cfgC", "cfgD", "cfgCam", "cfgKey", "cfgEmpty"].map((name) => (
              <PlainButton key={name} aria-label={name}><Icon name={name} /></PlainButton>
            ))}
          </ConfigRow>
        </ConfigPanel>
      </GroupBody>
      <GroupTitle>Konfigurációk</GroupTitle>
    </Group>
    <Group $w={97}>
      <GroupBody $pad={2}>
        <Tool icon="moveFace" lines={["Felületek", "mozgatása"]} w={44} menu />
        <Tool icon="deleteFace" lines={["Felületek", "törlése"]} w={34} menu />
        <Stack icons={["faceRed", "facePurple"]} />
      </GroupBody>
      <GroupTitle>Módosítás</GroupTitle>
    </Group>
    <Group $w={129}>
      <GroupBody $pad={2}>
        <Tool icon="quickDim" lines={["Gyorsméretezés"]} w={56} />
        <Stack icons={["dimH", "dimAngle", "dimChain"]} carets={["dimChain"]} w={21} />
        <Stack icons={["dimSlope", "dimBars", "dimGrid"]} />
        <Stack icons={["dimTag", "dimArrow"]} w={16} />
        <Stack icons={["textStyle", "textUp", "textDown"]} w={16} pad={2} edge />
      </GroupBody>
      <GroupTitle>Méret</GroupTitle>
    </Group>
    <Group $w={47}>
      <GroupBody $pad={2}>
        <Tool icon="windows" lines={["Ablakváltás"]} w={42} menu disabled />
      </GroupBody>
      <GroupTitle>Ablak</GroupTitle>
    </Group>
  </Ribbon>
);

/* ---------- workspace ---------- */

const Workspace = styled.div`
  display: flex;
  flex: 1;
  min-height: 0;
`;

const DocumentArea = styled.div`
  display: flex;
  flex: 1;
  flex-direction: column;
  min-width: 0;
`;

const FloatingBar = styled.div`
  display: flex;
  align-self: center;
  align-items: center;
  gap: 3px;
  width: 140px;
  height: 17px;
  margin-right: 56px;
  padding-left: 2px;
  border: 1px solid #e3e3e6;
  border-top: 0;
`;

const Grip = styled.i`
  width: 3px;
  height: 11px;
  margin-right: 1px;
  background: repeating-linear-gradient(#ccc 0 1px, transparent 1px 3px);
`;

const DocumentTabs = styled.div`
  display: flex;
  align-items: flex-end;
  justify-content: space-between;
  height: 21px;
  border-bottom: 2px solid #bac7cc;
`;

const DocumentTab = styled.div`
  display: flex;
  align-items: center;
  gap: 2px;
  width: 116px;
  height: 18px;
  margin-left: 1px;
  padding: 0 2px 0 10px;
  border: 1px solid #bfc6d2;
  border-top-color: #26457e;
  border-bottom: 0;
  background: #fff;
  font-family: "Noto Sans", sans-serif;
  color: #2b4f85;

  span {
    flex: 1;
  }
`;

const DocumentNav = styled.div`
  display: flex;
  align-items: center;
  gap: 3px;
  height: 18px;
  padding-right: 1px;
`;

const Viewport = styled.main`
  position: relative;
  flex: 1;
  min-height: 0;
  background: #f8f8f9;
`;

const Scene = styled.svg`
  display: block;
  width: 100%;
  height: 100%;
`;

const CX = 673;
const flip = (pts) => pts.map(([x, y]) => [2 * CX - x, y]);
const mirror = (pts) => [...pts, ...flip(pts.slice(0, -1).reverse())];

// Catmull-Rom through the points, written out as cubic segments.
const curve = (pts, lead = "M", closed = false) => {
  const n = pts.length;
  const at = (i) => (closed ? pts[(i + n) % n] : pts[Math.max(0, Math.min(n - 1, i))]);
  let d = `${lead}${pts[0].join(" ")}`;
  for (let i = 0; i < (closed ? n : n - 1); i += 1) {
    const [a, b, c, e] = [at(i - 1), at(i), at(i + 1), at(i + 2)];
    d += `C${b[0] + (c[0] - a[0]) / 6} ${b[1] + (c[1] - a[1]) / 6} ${c[0] - (e[0] - b[0]) / 6} ${c[1] - (e[1] - b[1]) / 6} ${c[0]} ${c[1]}`;
  }
  return d;
};

const top = mirror([[306, 520], [308, 493], [320, 455], [343, 425], [372, 402], [423, 379], [490, 361], [567, 349], [673, 342]]);
const bottom = mirror([[306, 528], [309, 543], [320, 560], [343, 581], [372, 598], [407, 613], [473, 629], [567, 642], [673, 645]]);
const rim = mirror([[306, 528], [309, 512], [320, 493], [343, 471], [371, 453], [427, 433], [495, 419], [567, 411], [623, 408], [673, 407]]);

const bodyPath = `${curve([...top, ...[...bottom].reverse()], "M", true)}Z`;
const frontPath = `${curve(rim)}${curve([...bottom].reverse(), "L")}Z`;

const faint = [
  mirror([[426, 433], [425, 425], [432, 415], [457, 398], [500, 382], [567, 368], [633, 361], [673, 359]]),
  mirror([[495, 419], [517, 410], [567, 399], [633, 391], [673, 389]]),
];
const faintHalf = [[371, 453], [369, 433], [380, 413], [400, 394], [423, 380], [450, 371]];
const thin = mirror([[473, 500], [567, 506], [673, 507]]);
const thinHalf = [
  [[406, 438], [407, 420], [411, 401], [417, 387], [428, 377]],
  [[429, 437], [433, 453], [447, 473], [460, 488], [473, 500]],
  [[473, 500], [445, 518], [427, 539], [413, 561], [407, 584], [407, 613]],
];
const thick = [
  mirror([[495, 420], [517, 427], [567, 436], [620, 440], [673, 441]]),
  mirror([[427, 433], [436, 442], [473, 458], [533, 473], [600, 482], [673, 485]]),
  mirror([[371, 453], [380, 467], [400, 484], [457, 510], [533, 529], [600, 538], [673, 541]]),
];

const Model = () => (
  <Scene viewBox="0 130 1261 576" role="img" aria-label="Modell nézet">
    <defs>
      <linearGradient id="far" x1="306" x2="1040" y1="0" y2="0" gradientUnits="userSpaceOnUse">
        <stop offset="0" stopColor="#8078b0" />
        <stop offset="0.12" stopColor="#9b92d8" />
        <stop offset="0.4" stopColor="#9890d3" />
        <stop offset="0.7" stopColor="#8880bd" />
        <stop offset="0.88" stopColor="#746ca3" />
        <stop offset="1" stopColor="#454069" />
      </linearGradient>
      <linearGradient id="farShade" x1="0" x2="0" y1="342" y2="410" gradientUnits="userSpaceOnUse">
        <stop offset="0" stopColor="#645b94" stopOpacity=".65" />
        <stop offset="0.5" stopColor="#7a71ae" stopOpacity=".15" />
        <stop offset="1" stopColor="#7a71ae" stopOpacity="0" />
      </linearGradient>
      <linearGradient id="front" x1="0" x2="0" y1="407" y2="645" gradientUnits="userSpaceOnUse">
        <stop offset="0" stopColor="#7066a6" />
        <stop offset="0.3" stopColor="#8076b8" />
        <stop offset="0.55" stopColor="#968bd2" />
        <stop offset="0.68" stopColor="#a097df" />
        <stop offset="0.85" stopColor="#948bca" />
        <stop offset="1" stopColor="#8d84c1" />
      </linearGradient>
      <radialGradient id="leftShade" cx="310" cy="540" r="300" gradientUnits="userSpaceOnUse">
        <stop offset="0" stopColor="#4a4079" stopOpacity=".85" />
        <stop offset="0.25" stopColor="#62588f" stopOpacity=".45" />
        <stop offset="1" stopColor="#7c72ad" stopOpacity="0" />
      </radialGradient>
      <radialGradient id="rightLight" cx="950" cy="585" r="240" gradientUnits="userSpaceOnUse">
        <stop offset="0" stopColor="#a29ae2" stopOpacity=".8" />
        <stop offset="1" stopColor="#a29ae2" stopOpacity="0" />
      </radialGradient>
      <linearGradient id="pin" x1="669" x2="678" y1="0" y2="0" gradientUnits="userSpaceOnUse">
        <stop offset="0" stopColor="#8f9094" />
        <stop offset="0.4" stopColor="#d0d1d6" />
        <stop offset="1" stopColor="#777" />
      </linearGradient>
    </defs>

    <ellipse cx={CX} cy="616" rx="367" ry="49" fill="#efeff0" />
    <path d={bodyPath} fill="url(#far)" />
    <path d={bodyPath} fill="url(#farShade)" />
    <path d={frontPath} fill="url(#front)" />
    <path d={frontPath} fill="url(#leftShade)" />
    <path d={frontPath} fill="url(#rightLight)" />

    <g fill="none" stroke="#5d558c" strokeWidth=".6">
      {faint.map((pts, i) => <path key={i} d={curve(pts)} />)}
      <path d={curve(faintHalf)} />
      <path d={curve(flip(faintHalf))} />
    </g>
    <g fill="none" stroke="#242038" strokeWidth=".8">
      <path d={bodyPath} />
      <path d={curve(rim)} />
      <path d={curve(thin)} />
      {thinHalf.map((pts, i) => (
        <React.Fragment key={i}>
          <path d={curve(pts)} />
          <path d={curve(flip(pts))} />
        </React.Fragment>
      ))}
    </g>
    <path d={curve(top.slice(5, 12))} fill="none" stroke="#111" strokeWidth="1.200" />
    <g fill="none" stroke="#050505" strokeWidth="1.700">
      {thick.map((pts, i) => <path key={i} d={curve(pts)} />)}
    </g>

    <path d="M669.500 281h8v62h-8Z" fill="url(#pin)" stroke="#333" strokeWidth=".8" />
    <path d="M677.500 282v61" stroke="#000" />
    <path d="M673 342v303" stroke="#000" strokeWidth="2" />
    <path d="M673 283v60" stroke="#111" strokeWidth="1.400" strokeDasharray="10 3 3 3" />

    <g fill="none" stroke="#c2185b">
      <path d="M576 278.500h95M576 342.500h97" strokeWidth=".9" />
      <path d="M581.500 252v47M581.500 322v47M668 310.500h8M673 312.500h8" />
      <path d="M670 276h6v6h-6ZM670 340h6v5h-6ZM675 340h5v5h-5Z" strokeWidth=".8" />
      <circle cx="677" cy="282" r="4" />
      <path d="m674 280 6 4m-6 0 6-4M672 341l6 4" />
      <circle cx="664" cy="296" r="5.500" strokeWidth="1.600" />
      <path d="m660 304 7-16M664 296h12" strokeWidth="1.500" />
    </g>
    <g fill="#e0105f">
      <path d="m581.500 278-2.500-13h5ZM581.500 343l-2.500 13h5ZM674 296l-9-4v8Z" />
    </g>
    <g fill="#d4145a" fontFamily="Liberation Sans, sans-serif" fontSize="18">
      <text x="576" y="317">8</text>
      <text x="680" y="302">1</text>
    </g>

    <path d="M673 465v-16" stroke="#1111cc" strokeWidth="1.600" />
    <path d="m673 442-2.500 9h5Z" fill="#1111cc" />
    <path d="M670 433h6l-6 6h6" fill="none" stroke="#2222dd" />
    <path d="M673 465h22" stroke="#e0232a" strokeWidth="1.600" />
    <path d="m704 465-9-2.500v5Z" fill="#e0232a" />
    <path d="m708 462 6 6m0-6-6 6" stroke="#e0232a" strokeWidth="1.200" />
    <path d="M673 465v18" stroke="#1bc52b" strokeWidth="1.600" />
    <path d="m670 479 3 4 3-4M670 486l3 3 3-3M673 489v4" fill="none" stroke="#22dd33" strokeWidth="1.300" />
    <circle cx="673" cy="465" r="3.200" fill="#f7ea20" stroke="#b4a410" strokeWidth=".6" />

    <path d="M714 267c1-4 5-4 7-2M723 268c-1 4-5 4-7 2" fill="none" stroke="#47a12f" strokeWidth="2.200" />
    <path d="m720 262 4 4-5 1ZM717 273l-4-4 5-1Z" fill="#47a12f" />
    <circle cx="718.500" cy="267.500" r="2" fill="#d78840" stroke="#6f6023" />

    <g>
      <path d="m1201 641 34-1 1 25h-37Z" fill="#fdfdfd" stroke="#bbb" />
      <path d="M1199 665h37l-2 21-33 1Z" fill="#e3e3e4" stroke="#bbb" />
      <g fill="#333" fontFamily="Liberation Sans, sans-serif" fontSize="5" textAnchor="middle">
        <text x="1218" y="654">Hátra</text>
        <text x="1218" y="678">Alulról</text>
      </g>
      <path d="M1218 663v-10" stroke="#8f90c4" />
      <path d="M1218 663v10" stroke="#9be59c" />
      <path d="M1218 663.500h13m-3-1.500 4 1.500-4 1.500" fill="none" stroke="#e98b96" />
      <circle cx="1218" cy="663" r="1.600" fill="#e4da6f" stroke="#a1993a" strokeWidth=".6" />
    </g>
  </Scene>
);

/* ---------- feature tree ---------- */

const TreePanel = styled.aside`
  position: absolute;
  left: 0;
  top: -1px;
  width: 168px;
  font-family: "Noto Sans", sans-serif;
`;

const TreeHandle = styled.div`
  height: 6px;
  border: 1px solid #8f9ba5;
  border-left: 0;
  background: repeating-linear-gradient(90deg, #7d8790 0 2px, transparent 2px 3px) center / 27px 1px no-repeat, #dfe4e8;
`;

const Tree = styled.ul`
  display: grid;
  grid-template-rows: repeat(14, 1fr);
  height: 149px;
  margin: 2px 0 0;
  padding: 0 0 0 4px;
  list-style: none;
`;

const TreeRow = styled.li`
  display: flex;
  align-items: center;
  padding-left: ${({ $level }) => [0, 5, 32][$level]}px;
`;

const Toggle = styled.button`
  width: 7px;
  height: 7px;
  margin-right: 5px;
  border: 1px solid ${({ $shown }) => ($shown ? "#a5a5a5" : "transparent")};
  background: ${({ $open }) => ($open === false ? "linear-gradient(#555, #555) center / 1px 3px no-repeat," : "")}
    ${({ $shown }) => ($shown ? "linear-gradient(#555, #555) center / 3px 1px no-repeat" : "none")};
`;

const TreeCheck = styled.input`
  appearance: none;
  flex: none;
  width: 8px;
  height: 8px;
  margin-right: 4px;
  border: 1px solid #7b7b7b;
  background: #fff;
  visibility: ${({ $hidden }) => ($hidden ? "hidden" : "visible")};

  &:checked::after {
    content: "";
    display: block;
    width: 5px;
    height: 3px;
    margin-top: 1px;
    border: solid #111;
    border-width: 0 0 1px 1px;
    transform: rotate(-45deg);
  }
`;

const TreeLabel = styled.label`
  display: flex;
  align-items: center;
  gap: 2px;
  height: 10px;
  padding-right: 3px;
  border: 1px solid #c5ced6;
  border-top-color: #eceff2;
  border-left-color: #eceff2;
  background: #f3f5f7;
  line-height: 9px;
  white-space: nowrap;
  color: ${({ $dim }) => ($dim ? "#8a8f94" : "#222")};
  font-weight: ${({ $bold }) => ($bold ? 700 : 400)};
`;

const ActiveLabel = styled.div`
  display: flex;
  align-items: center;
  justify-content: space-between;
  width: 122px;
  height: 9px;
  padding: 0 8px 0 12px;
  background: linear-gradient(90deg, #f0b23c, #fcdc83 50%, #f2b540);
  font-weight: 700;
  line-height: 9px;
  color: #222;

  &::after {
    content: "";
    border: 3px solid transparent;
    border-right: 10px solid #fff8e4;
    border-left: 0;
  }
`;

const treeRows = [
  { level: 1, icon: "base", label: "Base", checked: true },
  { level: 1, icon: "material", label: "Anyag (Nincs)", noCheck: true },
  { level: 1, icon: "refPlane", label: "Bázis referenciasíkok", open: false, dim: true },
  { level: 1, icon: "bodies", label: "Tervezett testek", open: true, checked: true },
  { level: 2, icon: "body", label: "Tervezett test_1", checked: true },
  { level: 1, icon: "construct", label: "Konstrukciós testek", open: true, checked: true },
  { level: 2, icon: "blank", label: "Subdivision test_1", checked: true },
  { level: 1, label: "Hagyományos", open: true, current: true },
  { level: 2, icon: "sphere", label: "Subdivision alakelem 1", checked: true, bold: true },
  { level: 2, icon: "sketch", label: "Vázlat 1", dim: true },
  { level: 2, icon: "curveA", label: "Vetített görbe 1", checked: true, bold: true },
  { level: 2, icon: "curveB", label: "Metszetgörbe 1", checked: true, bold: true },
  { level: 2, icon: "extrude", label: "Kihúzás 1", noCheck: true, bold: true },
];

const FeatureTree = () => (
  <TreePanel>
    <TreeHandle />
    <Tree>
      <TreeRow $level={0}>
        <TreeLabel as="span"><Icon name="part" size={9} /><Icon name="openLock" size={9} />kefefog_parna_2.par</TreeLabel>
      </TreeRow>
      {treeRows.map((row, i) => (
        <TreeRow key={row.label} $level={row.level}>
          {row.level === 1 && <Toggle $shown={row.open !== undefined} $open={row.open} aria-label={row.label} />}
          {row.current ? (
            <ActiveLabel>{row.label}</ActiveLabel>
          ) : (
            <>
              <TreeCheck type="checkbox" id={`node-${i}`} defaultChecked={row.checked} $hidden={row.noCheck} />
              <TreeLabel htmlFor={`node-${i}`} $dim={row.dim} $bold={row.bold}>
                <Icon name={row.icon} size={9} />
                {row.label}
              </TreeLabel>
            </>
          )}
        </TreeRow>
      ))}
    </Tree>
  </TreePanel>
);

/* ---------- command bar ---------- */

const CommandBar = styled.div`
  position: absolute;
  left: 302px;
  top: 13px;
  display: flex;
  align-items: center;
  width: 280px;
  height: 27px;
  padding: 1px;
  border: 1px solid #6b6b70;
  background: #fbfbfd;
  color: #222;
`;

const CommandMain = styled.button`
  display: grid;
  place-items: center;
  width: 28px;
  height: 23px;
  margin-right: 6px;
  border: 1px solid #a8793e;
  background: linear-gradient(#f3b77a, #f7a144 60%, #fbd08c);
`;

const StepButton = styled.button`
  display: grid;
  place-items: center;
  width: 21px;
  height: 18px;
  border: 1px solid #c6cfe4;
  border-left-width: 0;
  background: #eef1fa;

  &:nth-of-type(2) {
    border-left-width: 1px;
  }
`;

const FinishButton = styled.button`
  width: 39px;
  height: 18px;
  border: 2px solid #2e7cc0;
  background: #dcdfe3;
`;

const NameField = styled.div`
  display: flex;
  align-items: center;
  gap: 6px;
  height: 20px;
  margin-left: 3px;
  padding-left: 4px;
  border-left: 1px solid #777;
`;

const NameInput = styled.input`
  width: 85px;
  height: 13px;
  padding-left: 1px;
  border: 1px solid #5aa0c4;
  background: #fff;
  line-height: 11px;
`;

/* ---------- right rail ---------- */

const Rail = styled.aside`
  display: flex;
  flex: none;
  flex-direction: column;
  align-items: center;
  width: 19px;
  margin-top: 19px;
  padding: 2px 0 0 2px;
  background: #f3f4f5;
`;

const RailTab = styled.button`
  display: flex;
  flex: none;
  flex-direction: column;
  align-items: center;
  gap: 2px;
  height: 131px;
  color: #3d5c8c;

  span {
    writing-mode: vertical-rl;
    font-size: 8px;
    line-height: 10px;
  }
`;

const RailGroup = styled.div`
  display: flex;
  flex: none;
  flex-direction: column;
  justify-content: space-between;
  height: ${({ $h }) => $h}px;
  margin-bottom: 31px;
`;

/* ---------- status bar ---------- */

const StatusBar = styled.footer`
  display: flex;
  flex: none;
  align-items: center;
  height: 14px;
  padding-right: 1px;
  border-bottom: 2px solid #111a2c;
  background: #2a5599;
  color: #fff;
`;

const StatusText = styled.p`
  flex: 1;
  margin: 0;
  padding: 2px 0 0 284px;
  font: 500 7px/10px "Noto Sans", sans-serif;
`;

const CommandSearch = styled.input`
  width: 93px;
  height: 11px;
  padding-left: 2px;
  background: #fff;
  font-family: "Noto Sans", sans-serif;
  line-height: 11px;

  &::placeholder {
    color: #aaa;
    opacity: 1;
  }
`;

const StatusButton = styled.button`
  display: grid;
  place-items: center;
  width: ${({ $w }) => $w || 15}px;
  height: 12px;
`;

const ZoomSlider = styled.input`
  appearance: none;
  width: 76px;
  height: 11px;
  background: linear-gradient(#dce6f5, #dce6f5) center / 100% 1px no-repeat;

  &::-webkit-slider-thumb {
    appearance: none;
    width: 7px;
    height: 9px;
    border: 1px solid #fff;
    border-radius: 1px 1px 4px 4px;
    background: #7fa3d6;
  }
`;

const statusIcons = ["redoWhite", "zoomArea", "zoom", "fit", "hand", "rotate", "spin", "style", "colors"];

const App = () => (
  <Page>
    <GlobalStyle />
    <TopBar />
    <RibbonBar />
    <Workspace>
      <DocumentArea>
        <FloatingBar>
          <Grip />
          {["arc", "sketch", "boxCut", "mirror", "purpleBox", "boxRed", "screen", "diamond", "export"].map((name) => (
            <PlainButton key={name} aria-label={name}><Icon name={name} /></PlainButton>
          ))}
        </FloatingBar>
        <DocumentTabs>
          <DocumentTab>
            <Icon name="part" />
            <span>kefefog_parna_2.par</span>
            <PlainButton aria-label="Bezárás"><Icon name="close" size={8} /></PlainButton>
          </DocumentTab>
          <DocumentNav>
            <Svg viewBox="0 0 16 16" $size={7}><path d="M11 3v10L5 8Z" fill="none" stroke="#999" /></Svg>
            <Svg viewBox="0 0 16 16" $size={7}><path d="M5 3v10l6-5Z" fill="none" stroke="#999" /></Svg>
            <Caret $dark />
            <PlainButton aria-label="Nézet bezárása"><Icon name="close" size={9} /></PlainButton>
          </DocumentNav>
        </DocumentTabs>
        <Viewport>
          <Model />
          <FeatureTree />
          <CommandBar>
            <CommandMain aria-label="Forgáskihúzás"><BigIcon name="revolve" size={20} /></CommandMain>
            {["cmdPlane", "cmdSketch", "cmdAxis", "cmdArc"].map((name) => (
              <StepButton key={name} aria-label={name}><Icon name={name} size={15} /></StepButton>
            ))}
            <FinishButton>Befejez</FinishButton>
            <NameField>
              <label htmlFor="feature-name">Név:</label>
              <NameInput id="feature-name" defaultValue="Forgáskihúzás_1" />
            </NameField>
          </CommandBar>
        </Viewport>
      </DocumentArea>
      <Rail>
        <RailTab>
          <Icon name="library" size={14} />
          <span>Alakelem könyvtár</span>
        </RailTab>
        <RailGroup $h={172}>
          {["cubes", "picture", "stripes", "heat", "folderHelp", "tree", "keypad", "link"].map((name) => (
            <PlainButton key={name} aria-label={name}><Icon name={name} size={14} /></PlainButton>
          ))}
        </RailGroup>
        <RailGroup $h={82}>
          {["bookF", "heatForm", "gearBox", "folder"].map((name) => (
            <PlainButton key={name} aria-label={name}><Icon name={name} size={14} /></PlainButton>
          ))}
        </RailGroup>
      </Rail>
    </Workspace>
    <StatusBar>
      <StatusText>Kattintson az elemeken a szerkesztéshez.</StatusText>
      <CommandSearch placeholder="Parancs keresése" aria-label="Parancs keresése" />
      {statusIcons.map((name) => (
        <StatusButton key={name} aria-label={name}><Icon name={name} size={11} /></StatusButton>
      ))}
      <StatusButton $w={12} aria-label="Kicsinyítés"><Icon name="minus" size={11} /></StatusButton>
      <ZoomSlider type="range" defaultValue="28" aria-label="Nagyítás" />
      <StatusButton $w={14} aria-label="Nagyítás növelése"><Icon name="plus" size={11} /></StatusButton>
      <StatusButton $w={16} aria-label="Videó"><Icon name="video" size={11} /></StatusButton>
      <StatusButton $w={16} aria-label="Felvétel"><Icon name="record" size={11} /></StatusButton>
      <StatusButton $w={14} aria-label="Feltöltés"><Icon name="upload" size={11} /></StatusButton>
    </StatusBar>
    <svg width="0" height="0" aria-hidden="true"><Gradients /></svg>
  </Page>
);

export default App;
